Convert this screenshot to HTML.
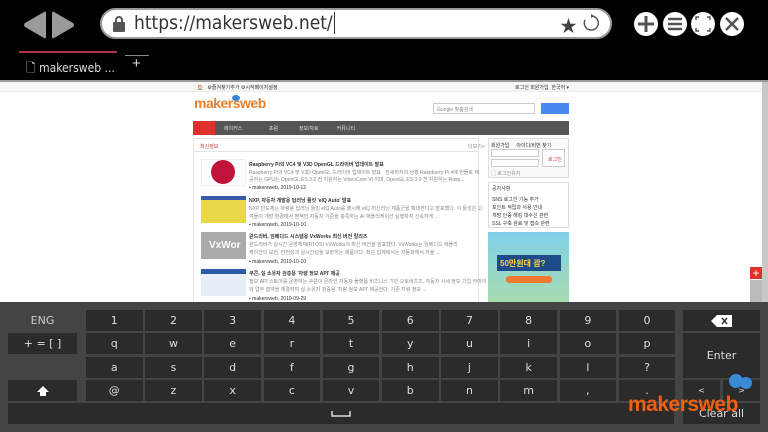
<!DOCTYPE html><html><head><meta charset="utf-8"><style>
*{margin:0;padding:0;box-sizing:border-box}
body{width:768px;height:432px;overflow:hidden;background:#000;position:relative;font-family:"Liberation Sans","Noto Sans CJK KR",sans-serif}
.a{position:absolute}
.k{position:absolute;background:#2b2b2b;color:#ddd;font-size:11px;display:flex;align-items:center;justify-content:center;font-family:"DejaVu Sans",sans-serif}
.t{position:absolute;font-size:5px;color:#333;white-space:nowrap}
.g{color:#888}
</style></head><body>
<!-- top bar -->
<svg class="a" style="left:20px;top:10px" width="58" height="30"><path d="M26 3 L26 27 Q26 29 24 28 L5 17 Q3 15 5 13 L24 2 Q26 1 26 3Z" fill="#9a9a9a"/><path d="M32 3 L32 27 Q32 29 34 28 L53 17 Q55 15 53 13 L34 2 Q32 1 32 3Z" fill="#9a9a9a"/></svg>
<div class="a" style="left:100px;top:8px;width:512px;height:31px;background:#fff;border:2px solid #999;border-radius:16px"></div>
<svg class="a" style="left:112px;top:15px" width="14" height="17"><rect x="1" y="7" width="12" height="10" rx="1" fill="#555"/><path d="M4 7V5a3 3 0 0 1 6 0v2" stroke="#555" stroke-width="2" fill="none"/></svg>
<div class="a" style="left:134px;top:12px;font-size:19px;color:#333;font-family:'DejaVu Sans Condensed','DejaVu Sans',sans-serif">https://makersweb.net/<span style="border-left:1px solid #333;margin-left:1px"></span></div>
<div class="a" style="left:560px;top:12px;font-size:17px;color:#444">★</div>
<svg class="a" style="left:582px;top:14px" width="18" height="18"><path d="M9 2 A7 7 0 1 1 3 6" stroke="#555" stroke-width="1.5" fill="none"/><path d="M9 0 L12 2 L9 4Z" fill="#555"/></svg>
<svg class="a" style="left:632px;top:10px" width="116" height="28" fill="none">
<circle cx="14" cy="14" r="12" fill="#fff"/><path d="M14 6v16M6 14h16" stroke="#555" stroke-width="3"/>
<circle cx="43" cy="14" r="12" fill="#fff"/><path d="M36 9h14M36 14h14M36 19h14" stroke="#555" stroke-width="2.5"/>
<circle cx="71" cy="14" r="12" fill="#fff"/><path d="M64 10V7h3M75 7h3v3M78 18v3h-3M67 21h-3v-3" stroke="#555" stroke-width="1.5"/>
<circle cx="100" cy="14" r="12" fill="#fff"/><path d="M94 8l12 12M106 8l-12 12" stroke="#555" stroke-width="2.5"/></svg>
<div class="a" style="left:19px;top:51px;width:98px;height:2px;background:#b0304a"></div>
<div class="a" style="left:125px;top:55px;width:24px;height:1px;background:#888"></div>
<div class="a" style="left:26px;top:59px;font-size:12px;color:#ddd;font-family:'DejaVu Sans Condensed',sans-serif">🗋 makersweb ...</div>
<div class="a" style="left:132px;top:55px;font-size:15px;color:#ddd">+</div>
<!-- page -->
<div class="a" style="left:0;top:80px;width:768px;height:223px;background:#fff;border-top:2px solid #999"></div>
<div class="a" style="left:0;top:82px;width:762px;height:10px;background:#f6f6f6;border-bottom:1px solid #eee"></div>
<div class="a" style="left:762px;top:82px;width:6px;height:221px;background:#c8c8c8"></div>
<div class="t" style="left:197px;top:84px">🏠 &nbsp; ⚙즐겨찾기추가 ⚙시작페이지설정</div>
<div class="t" style="left:515px;top:84px">로그인 회원가입 &nbsp;한국어 ▾</div>
<div class="a" style="left:194px;top:95px;font-size:14px;font-weight:bold;color:#e8802a;letter-spacing:-.5px">makersweb</div>
<div class="a" style="left:232px;top:95px;width:8px;height:6px;border-radius:50%;background:#3a86d6"></div>
<div class="a" style="left:433px;top:103px;width:102px;height:11px;border:1px solid #ccc"></div>
<div class="t g" style="left:437px;top:106px">Google 맞춤검색</div>
<div class="a" style="left:541px;top:103px;width:28px;height:11px;background:#4a8af0"></div>
<div class="a" style="left:193px;top:121px;width:376px;height:14px;background:#555"></div>
<div class="a" style="left:193px;top:121px;width:22px;height:14px;background:#e0302a"></div>
<div class="t" style="left:224px;top:125px;color:#ddd">메이커스 &nbsp; &nbsp; &nbsp; &nbsp; &nbsp; &nbsp; &nbsp; &nbsp; &nbsp; 포럼 &nbsp; &nbsp; &nbsp; &nbsp; &nbsp; &nbsp; &nbsp; 정보/자료 &nbsp; &nbsp; &nbsp; &nbsp; &nbsp; &nbsp; 커뮤니티</div>
<div class="a" style="left:193px;top:138px;width:286px;height:165px;border:1px solid #e4e4e4"></div>
<div class="a" style="left:194px;top:139px;width:284px;height:13px;border-bottom:1px solid #e4e4e4"></div>
<div class="t" style="left:200px;top:143px;color:#c33">최신정보</div><div class="t g" style="left:468px;top:143px">더보기+</div>
<div class="a" style="left:201px;top:159px;width:45px;height:27px;background:#fff;border:1px solid #eee"></div>
<div class="a" style="left:211px;top:160px;width:24px;height:24px;border-radius:50%;background:#c0143c"></div>
<div class="a" style="left:201px;top:196px;width:45px;height:27px;background:#e8d84a;border-top:4px solid #3a5aa8"></div>
<div class="a" style="left:201px;top:232px;width:45px;height:27px;background:#aaa;color:#fff;font-size:10px;font-weight:bold;padding:8px 0 0 8px">VxWor</div>
<div class="a" style="left:201px;top:269px;width:45px;height:27px;background:#e8eef8;border-top:5px solid #2a5aa8"></div>
<div class="t" style="left:249px;top:161px;font-weight:bold">Raspberry Pi의 VC4 및 V3D OpenGL 드라이버 업데이트 발표</div>
<div class="t g" style="left:249px;top:169px">Raspberry Pi의 VC4 및 V3D OpenGL 드라이버 업데이트 발표 &nbsp; 전세까지의 상황 Raspberry Pi 4에 번들로 제</div>
<div class="t g" style="left:249px;top:176px">공하는 GPU는 OpenGL ES 3.2 전 지원하는 VideoCore VI 이며, OpenGL ES 3.0 전 지원하는 Rasp...</div>
<div class="t" style="left:249px;top:185px">▪ makersweb, 2019-10-12</div>
<div class="t" style="left:249px;top:197px;font-weight:bold">NXP, 자동차 개발용 텀러닝 툴킷 'eIQ Auto' 발표</div>
<div class="t g" style="left:249px;top:205px">NXP 반도체는 자량용 딥러닝 툴킷 eIQ Auto를 출시해 eIQ 머신러닝 제품군을 확대한다고 발표했다. 이 툴킷은 고</div>
<div class="t g" style="left:249px;top:213px">객들이 개발 환경에서 벤젝한 자동차 기준을 충족하는 AI 애플리케이션 실행하지 신속하게 ...</div>
<div class="t" style="left:249px;top:222px">▪ makersweb, 2019-10-10</div>
<div class="t" style="left:249px;top:233px;font-weight:bold">윈드리버, 임베디드 시스템용 VxWorks 최신 버전 릴리즈</div>
<div class="t g" style="left:249px;top:241px">윈드리버가 실시간 운영체제(RTOS) VxWorks의 최신 버전을 발표했다. VxWorks는 임베디드 애플리</div>
<div class="t g" style="left:249px;top:249px">케이션의 보안, 안전성과 실시간성을 보장하는 제품이다. 최근 업계에서는 자동화에서 자율 ...</div>
<div class="t" style="left:249px;top:259px">▪ makersweb, 2019-10-10</div>
<div class="t" style="left:249px;top:270px;font-weight:bold">쿠콘, 실 소유자 검증용 '차량 정보 API' 제공</div>
<div class="t g" style="left:249px;top:278px">정보 API 스토어를 운영하는 쿠콘이 온라인 자동차 플랫폼 비즈니스 기반 오토비즈즈, 자동차 시세 정보 기업 카마의</div>
<div class="t g" style="left:249px;top:286px">와 업무 협약을 체결하여 실 소유자 검증용 '차량 정보 API' 제공한다. 기존 차량 정보 ...</div>
<div class="t" style="left:249px;top:296px">▪ makersweb, 2019-09-29</div>
<div class="a" style="left:488px;top:138px;width:81px;height:40px;border:1px solid #ddd;background:#fafafa"></div>
<div class="t" style="left:491px;top:142px">회원가입 &nbsp; &nbsp; 아이디/비번 찾기</div>
<div class="a" style="left:491px;top:149px;width:48px;height:8px;border:1px solid #ccc;background:#fff"></div>
<div class="a" style="left:491px;top:159px;width:48px;height:8px;border:1px solid #ccc;background:#fff"></div>
<div class="a" style="left:542px;top:149px;width:23px;height:18px;border:1px solid #ccc;background:#fff;color:#c33;font-size:5px;padding:6px 0 0 5px">로그인</div>
<div class="t g" style="left:491px;top:170px">▢ 로그인유지</div>
<div class="a" style="left:488px;top:182px;width:81px;height:46px;border:1px solid #ddd"></div>
<div class="t" style="left:492px;top:185px">공지사항</div>
<div class="t" style="left:492px;top:196px;line-height:8px">SNS 로그인 기능 추가<br>포인트 적립과 사용 안내<br>개방 인증 해킹 대수신 관련<br>SSL 구축 완료 및 접속 관련</div>
<div class="a" style="left:488px;top:232px;width:81px;height:71px;background:linear-gradient(#7fd0e8,#a8dcb0)"></div>
<div class="a" style="left:497px;top:255px;width:64px;height:16px;background:#1e4b8a;color:#ffd23a;font-size:8px;font-weight:bold;padding:3px">50만원대 괌?</div>
<div class="a" style="left:506px;top:276px;width:46px;height:7px;background:#f07830;border-radius:3px"></div>
<div class="a" style="left:750px;top:267px;width:12px;height:12px;background:#e0302a;color:#fff;font-size:12px;line-height:12px;text-align:center">+</div>
<div class="a" style="left:750px;top:280px;width:12px;height:22px;background:#bbb"></div>
<!-- keyboard -->
<div class="a" style="left:0;top:302px;width:768px;height:130px;background:#444"></div>
<div id="kb"></div>
<div class="a" style="left:628px;top:393px;font-size:21px;font-weight:bold;color:#f06010;letter-spacing:-.5px">makersweb</div>
<div class="a" style="left:729px;top:374px;width:14px;height:14px;border-radius:50%;background:#3a8ad8"></div>
<div class="a" style="left:740px;top:377px;width:12px;height:12px;border-radius:50%;background:#3a8ad8"></div>
<script>
var kb=document.getElementById('kb'),h='';
function k(x,y,w,hh,t,s){h+='<div class="k" style="left:'+x+'px;top:'+y+'px;width:'+w+'px;height:'+hh+'px;'+(s||'')+'">'+t+'</div>';}
var rows=[[310,'1234567890'],[333,'qwertyuiop'],[357,'asdfghjkl?'],[380,'@zxcvbnm,.']];
rows.forEach(function(r){for(var i=0;i<10;i++)k(86+i*59.2,r[0],56.5,21,r[1][i]);});
k(8,310,69,21,'ENG','background:#444;color:#ccc');
k(8,333,69,21,'+ = [ ]');
k(8,380,69,21,'<svg width="12" height="12"><path d="M6 1L12 7H9v4H3V7H0Z" fill="#fff"/></svg>');
k(683,310,77,21,'<svg width="22" height="12"><path d="M6 0H21V12H6L0 6Z" fill="#fff"/><path d="M11 3l5 6M16 3l-5 6" stroke="#333" stroke-width="1.5"/></svg>');
k(683,333,77,45,'Enter');
k(683,380,37,21,'<','font-size:8px');k(723,380,37,21,'>','font-size:8px');
k(8,403,666,21,'<svg width="20" height="8"><path d="M1 1V6H19V1" stroke="#ddd" stroke-width="1.5" fill="none"/></svg>');
k(683,403,77,21,'Clear all');
kb.innerHTML=h;
</script>
</body></html>
